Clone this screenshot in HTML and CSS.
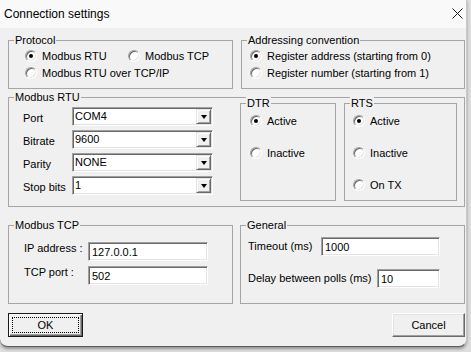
FILE: index.html
```html
<!DOCTYPE html>
<html lang="en">
<head>
    <meta charset="UTF-8">
    <meta name="viewport" content="width=device-width, initial-scale=1.0">
    <title>Connection settings</title>
    <link rel="stylesheet" href="styles.css">
</head>
<body>
    <div class="window">
        <div class="titlebar">
            <span class="title">Connection settings</span>
            <svg class="close" width="11" height="11" viewBox="0 0 11 11">
                <path d="M0.5 0.5l10 10M10.5 0.5l-10 10" stroke="#1a1a1a" stroke-width="1"/>
            </svg>
        </div>

        <div class="content">
            <div class="row-top">
                <div class="group">
                    <div class="group-title">Protocol</div>
                    <div class="protocol-body">
                        <div class="option"><span class="radio on"></span>Modbus RTU</div>
                        <div class="option"><span class="radio"></span>Modbus TCP</div>
                        <div class="option span-2"><span class="radio"></span>Modbus RTU over TCP/IP</div>
                    </div>
                </div>
                <div class="group">
                    <div class="group-title">Addressing convention</div>
                    <div class="addressing-body">
                        <div class="option"><span class="radio on"></span>Register address (starting from 0)</div>
                        <div class="option"><span class="radio"></span>Register number (starting from 1)</div>
                    </div>
                </div>
            </div>

            <div class="group rtu">
                <div class="group-title">Modbus RTU</div>
                <div class="rtu-body">
                    <div class="serial">
                        <span class="label">Port</span>
                        <div class="combo"><span class="combo-value">COM4</span><span class="combo-btn"><span class="arrow"></span></span></div>
                        <span class="label">Bitrate</span>
                        <div class="combo"><span class="combo-value">9600</span><span class="combo-btn"><span class="arrow"></span></span></div>
                        <span class="label">Parity</span>
                        <div class="combo"><span class="combo-value">NONE</span><span class="combo-btn"><span class="arrow"></span></span></div>
                        <span class="label">Stop bits</span>
                        <div class="combo"><span class="combo-value">1</span><span class="combo-btn"><span class="arrow"></span></span></div>
                    </div>
                    <div class="group line dtr">
                        <div class="group-title">DTR</div>
                        <div class="line-body">
                            <div class="option"><span class="radio on"></span>Active</div>
                            <div class="option"><span class="radio"></span>Inactive</div>
                        </div>
                    </div>
                    <div class="group line rts">
                        <div class="group-title">RTS</div>
                        <div class="line-body">
                            <div class="option"><span class="radio on"></span>Active</div>
                            <div class="option"><span class="radio"></span>Inactive</div>
                            <div class="option"><span class="radio"></span>On TX</div>
                        </div>
                    </div>
                </div>
            </div>

            <div class="row-bottom">
                <div class="group">
                    <div class="group-title">Modbus TCP</div>
                    <div class="tcp-body">
                        <span class="label">IP address :</span>
                        <input class="field" type="text" value="127.0.0.1">
                        <span class="label">TCP port :</span>
                        <input class="field" type="text" value="502">
                    </div>
                </div>
                <div class="group">
                    <div class="group-title">General</div>
                    <div class="general-body">
                        <div class="general-row">
                            <span class="label">Timeout (ms)</span>
                            <input class="field timeout" type="text" value="1000">
                        </div>
                        <div class="general-row">
                            <span class="label">Delay between polls (ms)</span>
                            <input class="field delay" type="text" value="10">
                        </div>
                    </div>
                </div>
            </div>

            <div class="buttons">
                <button class="btn btn-default"><span class="focus">OK</span></button>
                <button class="btn btn-cancel"><span class="focus-none">Cancel</span></button>
            </div>
        </div>
    </div>
</body>
</html>
```

FILE: styles.css
```css
* {
    margin: 0;
    padding: 0;
    box-sizing: border-box;
}

body {
    font-family: "Liberation Sans", Arial, sans-serif;
    font-size: 11px;
    color: #000;
    background: #dedede;
    width: 471px;
    height: 352px;
    overflow: hidden;
}

.window {
    width: 467px;
    height: 347px;
    background: #f0f0f0;
    border-right: 1px solid #c9c9c9;
    border-bottom: 1px solid #5c5c5c;
    border-radius: 0 0 8px 8px;
    box-shadow: 0 2px 3px rgba(0, 0, 0, 0.35);
}

.titlebar {
    height: 28px;
    display: flex;
    align-items: center;
    justify-content: space-between;
    padding: 0 3px 0 4px;
    background: #f9f9f9;
    font-size: 12px;
}

.close {
    display: block;
    margin-top: -2px;
}

.content {
    padding: 12px 1px 9px 8px;
    display: flex;
    flex-direction: column;
}

/* group boxes */
.group {
    border: 1px solid #a5a5a5;
}

.group-title {
    display: table;
    margin: -8px 0 0 5px;
    padding: 0 1px;
    line-height: 14px;
    background: #f0f0f0;
}

.row-top {
    display: grid;
    grid-template-columns: 225px 224px;
    column-gap: 8px;
}

.option {
    display: flex;
    align-items: center;
    height: 16px;
    white-space: nowrap;
}

.radio {
    flex: none;
    width: 12px;
    height: 12px;
    margin-right: 5px;
    border-radius: 50%;
    background: #fff;
    border: 1px solid;
    border-color: #a0a0a0 #fff #fff #a0a0a0;
    box-shadow: inset 1px 1px 0 #696969, inset -1px -1px 0 #e3e3e3;
    display: flex;
    align-items: center;
    justify-content: center;
}

.radio.on::after {
    content: "";
    width: 4px;
    height: 4px;
    border-radius: 50%;
    background: #000;
}

.protocol-body {
    display: grid;
    grid-template-columns: 103px auto;
    row-gap: 1px;
    padding: 1px 0 7px 16px;
}

.span-2 {
    grid-column: 1 / 3;
}

.addressing-body {
    display: flex;
    flex-direction: column;
    gap: 1px;
    padding: 1px 0 7px 8px;
}

/* Modbus RTU */
.rtu {
    margin-top: 8px;
}

.rtu-body {
    display: flex;
    padding: 0 7px 5px 14px;
}

.serial {
    align-self: flex-start;
    display: grid;
    grid-template-columns: 49px 141px;
    grid-auto-rows: 19px;
    row-gap: 4px;
    margin: 3px 27px 0 0;
}

.label {
    line-height: 13px;
    white-space: nowrap;
}

.serial .label {
    padding-top: 5px;
}

.combo {
    display: flex;
    height: 19px;
    background: #fff;
    border: 1px solid;
    border-color: #a0a0a0 #fff #fff #a0a0a0;
    box-shadow: inset 1px 1px 0 #696969, inset -1px -1px 0 #e3e3e3;
}

.combo-value {
    flex: 1;
    padding: 2px 0 0 2px;
}

.combo-btn {
    width: 15px;
    margin: 1px 1px 1px 0;
    background: #f0f0f0;
    border: 1px solid;
    border-color: #e3e3e3 #696969 #696969 #e3e3e3;
    box-shadow: inset 1px 1px 0 #fff, inset -1px -1px 0 #a0a0a0;
    display: flex;
    align-items: center;
    justify-content: center;
}

.arrow {
    width: 0;
    height: 0;
    border-left: 3.5px solid transparent;
    border-right: 3.5px solid transparent;
    border-top: 4px solid #000;
    margin-top: 1px;
}

.line {
    margin-top: -1px;
}

.dtr {
    width: 96px;
    margin-right: 8px;
}

.rts {
    width: 113px;
}

.line-body {
    display: flex;
    flex-direction: column;
    gap: 16px;
    padding: 3px 0 7px 9px;
}

.rts .line-body {
    padding-left: 8px;
}

/* bottom row */
.row-bottom {
    margin-top: 18px;
    display: grid;
    grid-template-columns: 225px 225px;
    column-gap: 7px;
}

.field {
    height: 19px;
    font: inherit;
    color: #000;
    background: #fff;
    padding: 0 3px;
    border: 1px solid;
    border-color: #a0a0a0 #fff #fff #a0a0a0;
    box-shadow: inset 1px 1px 0 #696969, inset -1px -1px 0 #e3e3e3;
    outline: none;
}

.tcp-body {
    display: grid;
    grid-template-columns: 64px 120px;
    grid-auto-rows: 19px;
    row-gap: 5px;
    padding: 10px 0 0 15px;
}

.tcp-body .field {
    width: 120px;
}

.general-body {
    display: flex;
    flex-direction: column;
    gap: 13px;
    padding: 5px 24px 15px 7px;
}

.general-row {
    display: flex;
    align-items: center;
}

.general-row .field {
    margin-left: auto;
}

.timeout {
    width: 119px;
}

.delay {
    width: 63px;
}

/* buttons */
.buttons {
    margin-top: 9px;
    display: flex;
    justify-content: space-between;
}

.btn {
    display: flex;
    height: 24px;
    padding: 3px;
    font: inherit;
    color: #000;
    background: #f0f0f0;
    border: 1px solid;
    border-color: #fff #696969 #696969 #fff;
    box-shadow: inset -1px -1px 0 #a0a0a0, inset 1px 1px 0 #e3e3e3;
}

.btn-default {
    width: 75px;
    border-color: #1a1a1a;
    box-shadow: inset 1px 1px 0 #fff, inset -1px -1px 0 #696969, inset -2px -2px 0 #a0a0a0;
}

.btn-cancel {
    width: 73px;
}

.focus,
.focus-none {
    flex: 1;
    display: flex;
    align-items: center;
    justify-content: center;
}

.focus {
    border: 1px dotted #000;
}
```
